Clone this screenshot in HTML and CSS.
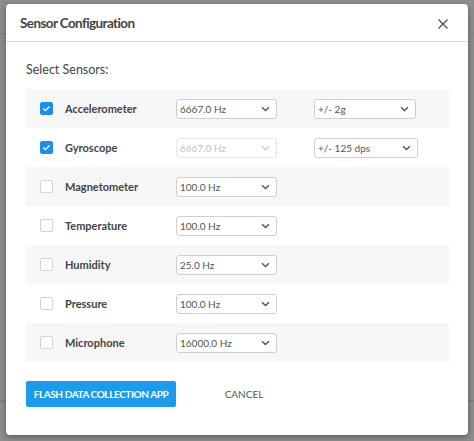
FILE: index.html
```html
<!DOCTYPE html>
<html>
<head>
<meta charset="utf-8">
<link rel="stylesheet" href="styles.css">
</head>
<body>
<div class="dialog">
  <div class="header">
    <h1 class="title">Sensor Configuration</h1>
    <svg class="close" width="12" height="12" viewBox="0 0 12 12"><path d="M1.5 1.5L10.5 10.5M10.5 1.5L1.5 10.5" stroke="#555" stroke-width="1.4" fill="none"/></svg>
  </div>
  <div class="body">
    <div class="section-label">Select Sensors:</div>
    <div class="rows">
      <div class="row">
        <div class="check on"><svg width="9" height="7" viewBox="0 0 9 7"><path d="M1.2 3.6L3.4 5.6L7.8 1.3" stroke="#fff" stroke-width="1.3" fill="none"/></svg></div>
        <div class="name">Accelerometer</div>
        <div class="select"><span>6667.0 Hz</span><svg width="9" height="6" viewBox="0 0 9 6"><path d="M1 1.2L4.5 4.6L8 1.2" stroke="#555" stroke-width="1.4" fill="none"/></svg></div>
        <div class="select wide"><span>+/- 2g</span><svg width="9" height="6" viewBox="0 0 9 6"><path d="M1 1.2L4.5 4.6L8 1.2" stroke="#555" stroke-width="1.4" fill="none"/></svg></div>
      </div>
      <div class="row">
        <div class="check on"><svg width="9" height="7" viewBox="0 0 9 7"><path d="M1.2 3.6L3.4 5.6L7.8 1.3" stroke="#fff" stroke-width="1.3" fill="none"/></svg></div>
        <div class="name">Gyroscope</div>
        <div class="select disabled"><span>6667.0 Hz</span><svg width="9" height="6" viewBox="0 0 9 6"><path d="M1 1.2L4.5 4.6L8 1.2" stroke="#c8c8c8" stroke-width="1.2" fill="none"/></svg></div>
        <div class="select wider"><span>+/- 125 dps</span><svg width="9" height="6" viewBox="0 0 9 6"><path d="M1 1.2L4.5 4.6L8 1.2" stroke="#555" stroke-width="1.4" fill="none"/></svg></div>
      </div>
      <div class="row">
        <div class="check"></div>
        <div class="name">Magnetometer</div>
        <div class="select"><span>100.0 Hz</span><svg width="9" height="6" viewBox="0 0 9 6"><path d="M1 1.2L4.5 4.6L8 1.2" stroke="#555" stroke-width="1.4" fill="none"/></svg></div>
      </div>
      <div class="row">
        <div class="check"></div>
        <div class="name">Temperature</div>
        <div class="select"><span>100.0 Hz</span><svg width="9" height="6" viewBox="0 0 9 6"><path d="M1 1.2L4.5 4.6L8 1.2" stroke="#555" stroke-width="1.4" fill="none"/></svg></div>
      </div>
      <div class="row">
        <div class="check"></div>
        <div class="name">Humidity</div>
        <div class="select"><span>25.0 Hz</span><svg width="9" height="6" viewBox="0 0 9 6"><path d="M1 1.2L4.5 4.6L8 1.2" stroke="#555" stroke-width="1.4" fill="none"/></svg></div>
      </div>
      <div class="row">
        <div class="check"></div>
        <div class="name">Pressure</div>
        <div class="select"><span>100.0 Hz</span><svg width="9" height="6" viewBox="0 0 9 6"><path d="M1 1.2L4.5 4.6L8 1.2" stroke="#555" stroke-width="1.4" fill="none"/></svg></div>
      </div>
      <div class="row">
        <div class="check"></div>
        <div class="name">Microphone</div>
        <div class="select"><span>16000.0 Hz</span><svg width="9" height="6" viewBox="0 0 9 6"><path d="M1 1.2L4.5 4.6L8 1.2" stroke="#555" stroke-width="1.4" fill="none"/></svg></div>
      </div>
    </div>
  </div>
  <div class="footer">
    <button class="btn primary">FLASH DATA COLLECTION APP</button>
    <button class="btn text">CANCEL</button>
  </div>
</div>
</body>
</html>
```

FILE: styles.css
```css
html, body {
  margin: 0;
  padding: 0;
}
body {
  width: 474px;
  height: 441px;
  overflow: hidden;
  font-family: "Lato", "Open Sans", sans-serif;
  background-color: #8d8d8d;
  background-image:
    linear-gradient(to bottom, transparent 33px, #7f7f7f 33px, #7f7f7f 34px, transparent 34px),
    linear-gradient(to bottom, transparent 400px, #7f7f7f 400px, #7f7f7f 402px, transparent 402px);
  padding-top: 4px;
  box-sizing: border-box;
}
.dialog {
  margin-left: 6px;
  width: 462px;
  height: 431px;
  background: #fff;
  border-radius: 4px;
  box-shadow: 0 2px 6px rgba(0,0,0,0.35);
  display: flex;
  flex-direction: column;
  box-sizing: border-box;
}
.header {
  height: 38px;
  border-bottom: 1px solid #dcdcdc;
  display: flex;
  align-items: center;
  justify-content: space-between;
  padding: 0 19px 0 14px;
  box-sizing: border-box;
}
.title {
  margin: 0;
  font-size: 13.5px;
  font-weight: 700;
  color: #444;
  letter-spacing: -0.6px;
  padding-top: 1px;
}
.close {
  display: block;
  margin-top: 2px;
}
.body {
  padding: 20px 19px 0 20px;
}
.section-label {
  font-size: 12.5px;
  font-weight: 400;
  color: #444;
  height: 16px;
  line-height: 16px;
}
.rows {
  margin-top: 11px;
  display: flex;
  flex-direction: column;
}
.row {
  height: 39px;
  display: flex;
  align-items: center;
  padding-left: 14px;
}
.row:nth-child(odd) {
  background: #f7f7f7;
}
.check {
  width: 13px;
  height: 13px;
  box-sizing: border-box;
  border: 1px solid #d4d4d4;
  border-radius: 2px;
  background: #fff;
  display: flex;
  align-items: center;
  justify-content: center;
}
.check.on {
  background: #1b8fe6;
  border-color: #1b8fe6;
}
.name {
  margin-left: 12px;
  width: 111px;
  font-size: 11px;
  font-weight: 700;
  color: #444;
}
.select {
  width: 101px;
  height: 20px;
  box-sizing: border-box;
  border: 1px solid #cfcfcf;
  border-radius: 3px;
  background: #fff;
  display: flex;
  align-items: center;
  justify-content: space-between;
  padding: 0 6px 0 3px;
  font-size: 10px;
  color: #555;
}
.select.disabled {
  border-color: #e8e8e8;
  color: #c4c4c4;
}
.select.wide {
  margin-left: 37px;
  width: 102px;
}
.select.wider {
  margin-left: 37px;
  width: 104px;
}
.footer {
  margin-top: 19px;
  padding-left: 20px;
  display: flex;
  align-items: center;
}
.btn {
  font-family: "Lato", "Open Sans", sans-serif;
  border: none;
  cursor: pointer;
  font-size: 10px;
  font-weight: 700;
  padding: 0;
  height: 26px;
}
.btn.primary {
  width: 150px;
  background: #1b9be9;
  color: #fff;
  border-radius: 2px;
  letter-spacing: -0.4px;
}
.btn.text {
  margin-left: 40px;
  width: 56px;
  background: transparent;
  color: #555;
  font-weight: 400;
}
```
